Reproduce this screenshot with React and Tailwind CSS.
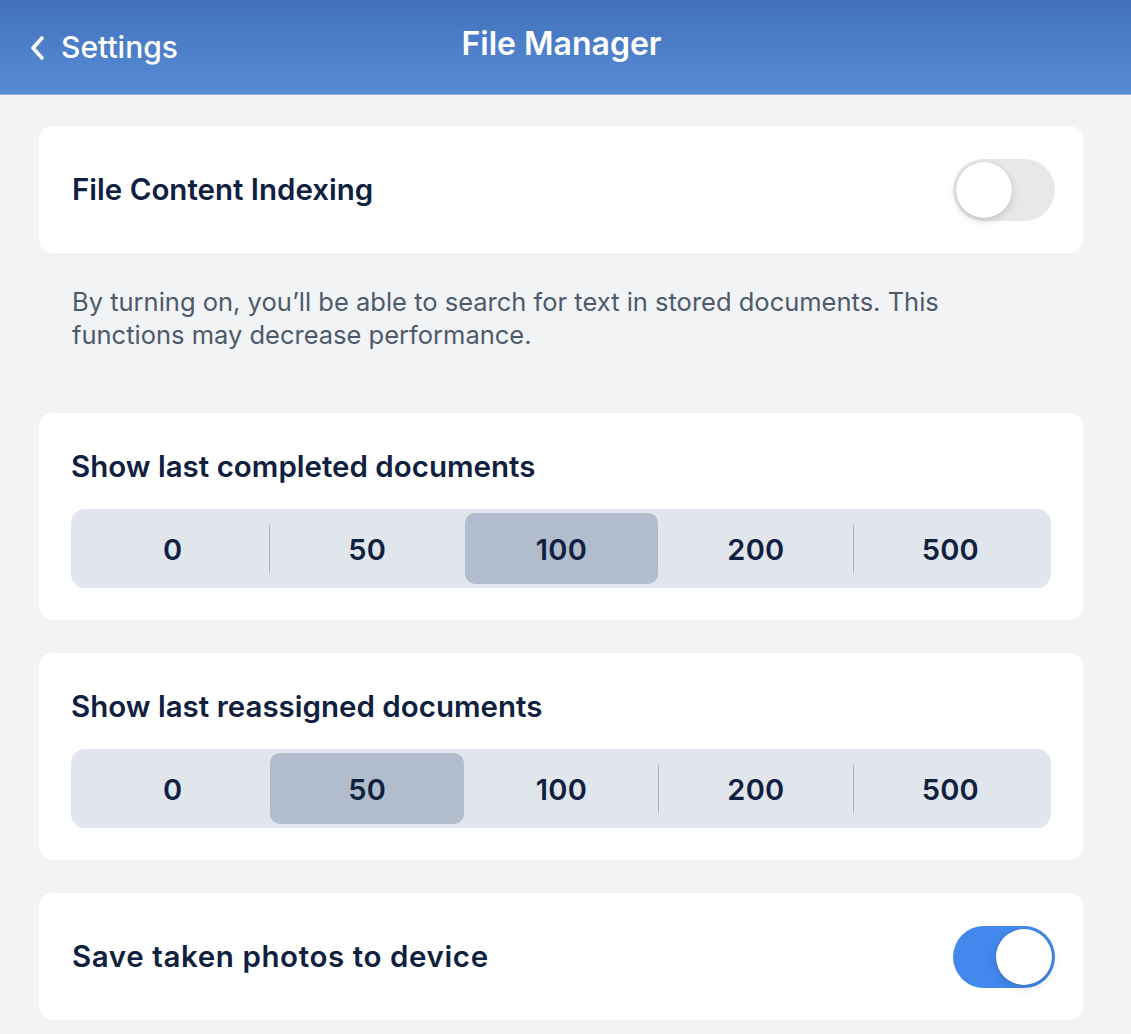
import React, { useState } from 'react';

const font = { fontFamily: 'Inter, "Noto Sans", sans-serif' };
const OPTIONS = [0, 50, 100, 200, 500];

function Toggle({ on, onChange }) {
  return (
    <button
      onClick={() => onChange(!on)}
      className={`relative w-[102px] h-[62px] rounded-full shrink-0 transition-colors ${
        on ? 'bg-[#4388ec]' : 'bg-[#e8e8ea]'
      }`}
    >
      <span
        className={`absolute top-[3px] w-[56px] h-[56px] rounded-full bg-white shadow-[0_3px_8px_rgba(0,0,0,0.15),0_0_1px_rgba(0,0,0,0.2)] transition-all ${
          on ? 'left-[43px]' : 'left-[3px]'
        }`}
      />
    </button>
  );
}

function Segmented({ value, onChange }) {
  const idx = OPTIONS.indexOf(value);
  return (
    <div className="flex h-[79px] rounded-[14px] bg-[#e1e6ed] p-[4px]">
      {OPTIONS.map((opt, i) => {
        const selected = i === idx;
        // divider shows between two unselected segments
        const showDivider = i > 0 && i !== idx && i - 1 !== idx;
        return (
          <div key={opt} className="flex-1 flex items-center">
            <div className={`w-px h-[48px] ${showDivider ? 'bg-[#a9b1bc]' : 'bg-transparent'}`} />
            <button
              onClick={() => onChange(opt)}
              className={`flex-1 h-full pt-[3px] rounded-[10px] text-[29px] font-semibold text-[#10213f] tracking-[0.3px] ${
                selected ? 'bg-[#b1bdcd]' : ''
              }`}
            >
              {opt}
            </button>
          </div>
        );
      })}
    </div>
  );
}

export default function App() {
  const [indexing, setIndexing] = useState(false);
  const [savePhotos, setSavePhotos] = useState(true);
  const [completed, setCompleted] = useState(100);
  const [reassigned, setReassigned] = useState(50);

  return (
    <div className="min-h-[1034px] bg-[#f2f3f5]" style={font}>
      {/* Header */}
      <div className="relative h-[95px] bg-gradient-to-b from-[#4272bb] to-[#568cd4] border-b border-[#9fb2cc] flex items-center justify-center">
        <button className="absolute left-[30px] top-[25px] flex items-center gap-[15px] text-white text-[30px] font-medium">
          <svg width="16" height="26" viewBox="0 0 16 26" fill="none">
            <path d="M12 3L3 13l9 10" stroke="white" strokeWidth="3.6" strokeLinecap="round" strokeLinejoin="round" />
          </svg>
          Settings
        </button>
        <h1 className="text-white text-[32px] font-semibold -mt-[6px] -ml-[8px]">File Manager</h1>
      </div>

      <div className="px-[39px] pt-[31px] pb-[14px] w-[1122px]">
        {/* File Content Indexing */}
        <div className="bg-white rounded-[14px] h-[127px] pl-[33px] pr-[28px] flex items-center justify-between">
          <span className="text-[29.5px] font-semibold text-[#10213f]">File Content Indexing</span>
          <Toggle on={indexing} onChange={setIndexing} />
        </div>

        <p className="px-[33px] pt-[32px] text-[25.5px] leading-[33px] text-[#4d5a6b]">
          By turning on, you’ll be able to search for text in stored documents. This functions may decrease performance.
        </p>

        {/* Completed */}
        <div className="mt-[62px] bg-white rounded-[14px] pt-[34px] pb-[32px] px-[32px]">
          <div className="text-[29.5px] font-semibold text-[#10213f] leading-[38px] mb-[24px]">
            Show last completed documents
          </div>
          <Segmented value={completed} onChange={setCompleted} />
        </div>

        {/* Reassigned */}
        <div className="mt-[33px] bg-white rounded-[14px] pt-[34px] pb-[32px] px-[32px]">
          <div className="text-[29.5px] font-semibold text-[#10213f] leading-[38px] mb-[24px]">
            Show last reassigned documents
          </div>
          <Segmented value={reassigned} onChange={setReassigned} />
        </div>

        {/* Save photos */}
        <div className="mt-[33px] bg-white rounded-[14px] h-[127px] pl-[33px] pr-[28px] flex items-center justify-between">
          <span className="text-[29.5px] font-semibold text-[#10213f] tracking-[0.6px]">Save taken photos to device</span>
          <Toggle on={savePhotos} onChange={setSavePhotos} />
        </div>
      </div>
    </div>
  );
}
